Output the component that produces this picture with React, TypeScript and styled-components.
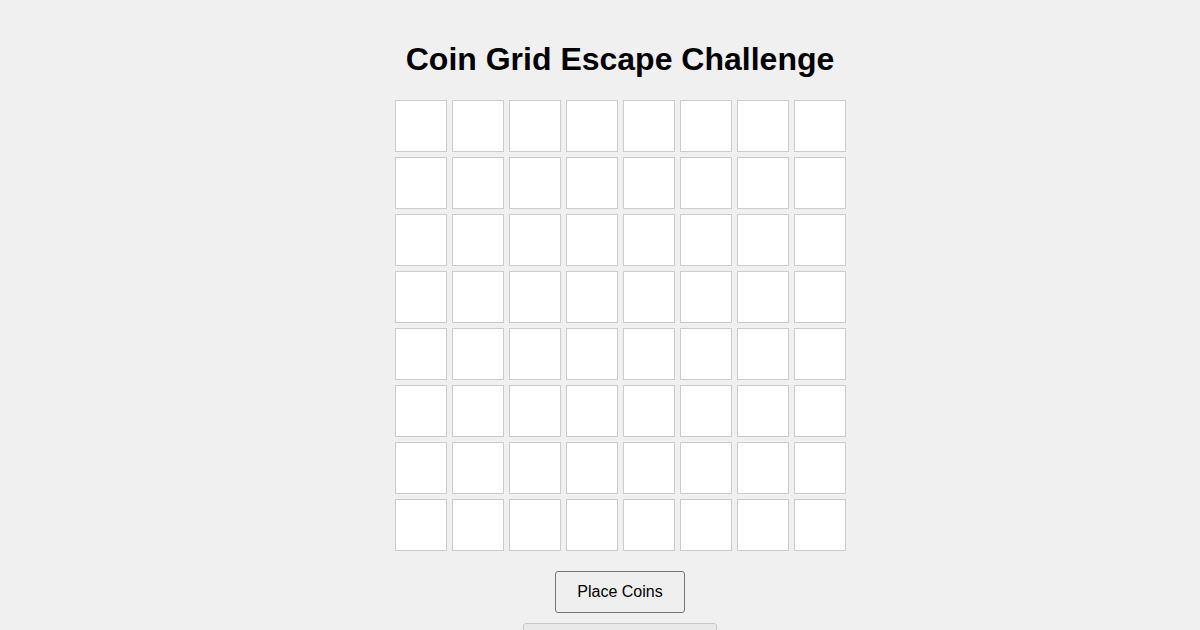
import styled, { createGlobalStyle } from "styled-components";

const GlobalStyle = createGlobalStyle`
  body {
    margin: 0;
    padding: 20px 20px 20px 60px;
    background-color: #f0f0f0;
    font-family: "Liberation Sans", Arial, sans-serif;
  }
`;

const SIZE = 8;

export default function App() {
  const cells = Array.from({ length: SIZE * SIZE }, (_, i) => i);

  return (
    <>
      <GlobalStyle />
      <Page>
        <Title>Coin Grid Escape Challenge</Title>
        <Grid>
          {cells.map((i) => (
            <Cell key={i} />
          ))}
        </Grid>
        <Button>Place Coins</Button>
        <Button disabled>Check Escape Route</Button>
      </Page>
    </>
  );
}

const Page = styled.main`
  display: flex;
  flex-direction: column;
  align-items: center;
`;

const Title = styled.h1`
  font-size: 32px;
  font-weight: 700;
  color: #000;
  margin: 21.44px 0;
`;

const Grid = styled.div`
  display: grid;
  grid-template-columns: repeat(${SIZE}, 52px);
  grid-auto-rows: 52px;
  gap: 5px;
`;

const Cell = styled.div`
  box-sizing: border-box;
  background-color: #fff;
  border: 1px solid #ccc;
`;

const Button = styled.button`
  margin-top: 20px;
  padding: 11px 21px;
  font-family: "Liberation Sans", Arial, sans-serif;
  font-size: 16px;
  color: #000;
  background-color: #efefef;
  border: 1px solid #767676;
  border-radius: 3px;

  & + & {
    margin-top: 10px;
  }

  &:disabled {
    color: rgba(16, 16, 16, 0.3);
    background-color: #e9e9e9;
    border-color: #c8c8c8;
  }
`;
